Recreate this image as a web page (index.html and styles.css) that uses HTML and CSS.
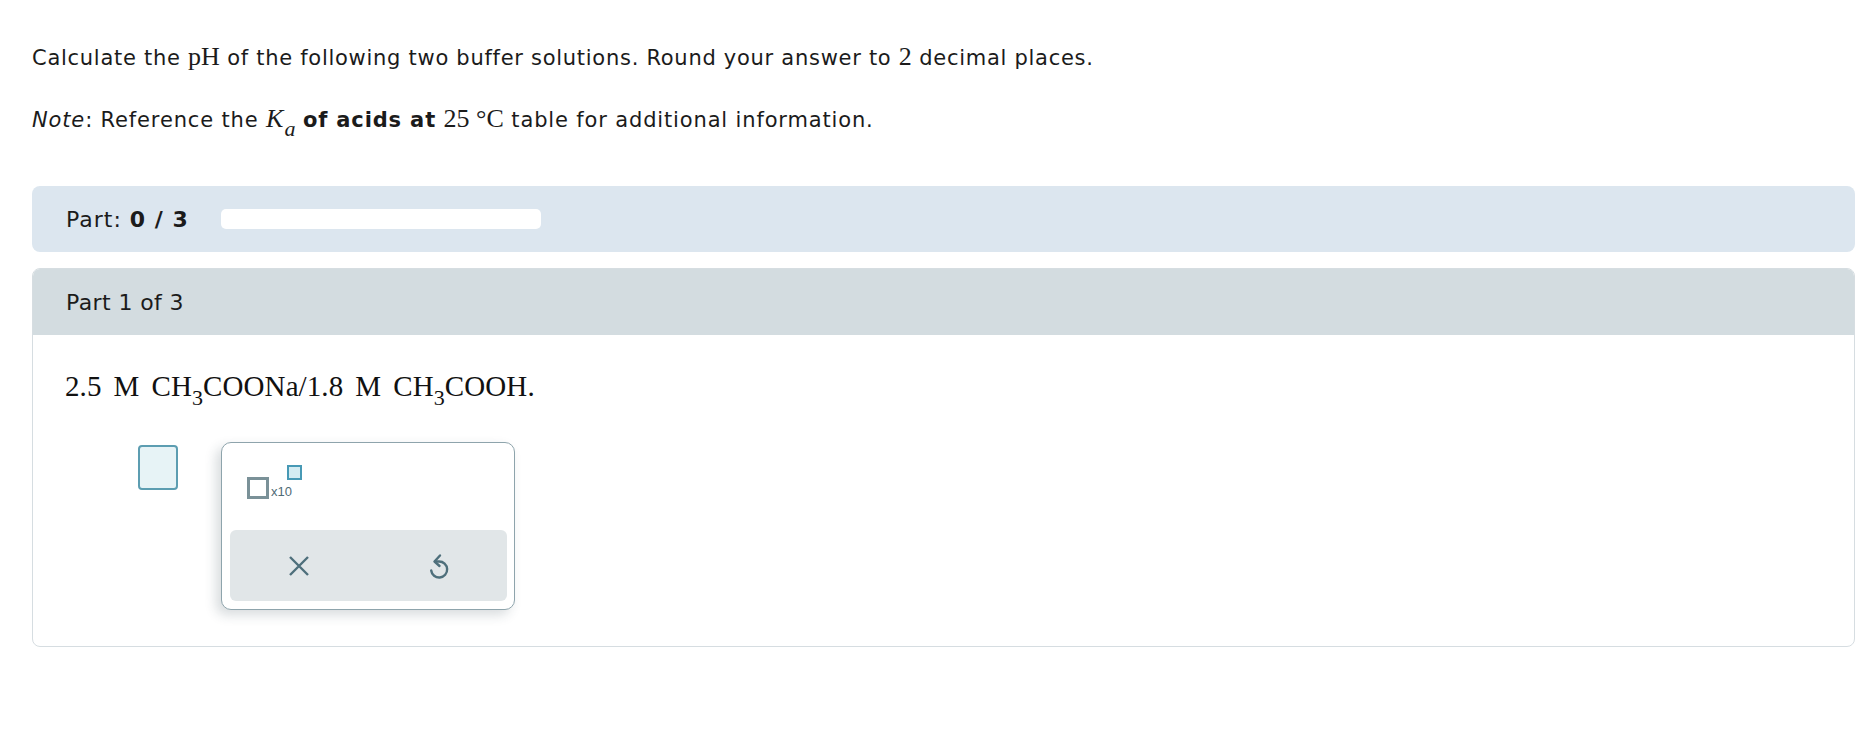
FILE: index.html
```html
<!DOCTYPE html>
<html>
<head>
<meta charset="utf-8">
<link rel="stylesheet" href="styles.css">
</head>
<body>
<div class="page">
  <p class="intro">Calculate the <span class="m">pH</span> of the following two buffer solutions. Round your answer to <span class="m">2</span> decimal places.</p>
  <p class="note"><i>Note</i>: Reference the <span class="m"><i>K</i><sub class="ka">a</sub></span> <b>of acids at</b> <span class="m">25 °C</span> table for additional information.</p>

  <div class="partbar">
    <span class="partlabel">Part: <b>0 / 3</b></span>
    <div class="progress"></div>
  </div>

  <div class="card">
    <div class="card-head">Part 1 of 3</div>
    <div class="card-body">
      <div class="formula">2.5<span class="sp"></span>M<span class="sp"></span>CH<sub>3</sub>COONa/1.8<span class="sp"></span>M<span class="sp"></span>CH<sub>3</sub>COOH.</div>
      <div class="answer-row">
        <div class="answer-box"></div>
        <div class="palette">
          <div class="palette-top">
            <div class="sci">
              <span class="sci-base"></span><span class="sci-x">x10</span><span class="sci-exp"></span>
            </div>
          </div>
          <div class="palette-actions">
            <button class="act" aria-label="clear">
              <svg width="22" height="22" viewBox="0 0 22 22"><path d="M2 2 L20 20 M20 2 L2 20" stroke="#4e6f7b" stroke-width="2.4" fill="none"/></svg>
            </button>
            <button class="act" aria-label="undo">
              <svg width="24" height="28" viewBox="0 0 24 28"><path d="M9 9.5 H13 A8 8 0 1 1 5.2 18.5" stroke="#4e6f7b" stroke-width="2.4" fill="none" stroke-linecap="round"/><path d="M14 3.5 L8.5 9.5 L13.5 14" stroke="#4e6f7b" stroke-width="2.4" fill="none" stroke-linecap="round" stroke-linejoin="round"/></svg>
            </button>
          </div>
        </div>
      </div>
    </div>
  </div>
</div>
</body>
</html>
```
FILE: styles.css
```css
html, body {
  margin: 0;
  padding: 0;
  background: #ffffff;
}
body {
  font-family: "DejaVu Sans", Verdana, sans-serif;
  font-size: 21px;
  letter-spacing: 0.72px;
  color: #1b1b1b;
}
.page {
  padding: 0 21px 0 32px;
}
.intro {
  margin: 0;
  padding-top: 45px;
  line-height: 24px;
}
.note {
  margin: 0;
  padding-top: 37px;
  line-height: 24px;
  height: 24px;
  letter-spacing: 0.85px;
}
.m {
  font-family: "Liberation Serif", "Times New Roman", serif;
  font-size: 26px;
  letter-spacing: 0;
}
.m i {
  font-style: italic;
}
.ka {
  font-size: 22px;
  font-style: italic;
  vertical-align: -9px;
  line-height: 0;
  margin-left: 1px;
}
.partbar {
  margin-top: 55px;
  height: 66px;
  background: #dce6ef;
  border-radius: 8px;
  display: flex;
  align-items: center;
  padding-left: 34px;
}
.partlabel {
  font-size: 22px;
  letter-spacing: 1px;
  width: 155px;
}
.partlabel b {
  font-weight: bold;
}
.progress {
  width: 320px;
  height: 20px;
  background: #ffffff;
  border-radius: 5px;
}
.card {
  margin-top: 16px;
  border: 1px solid #d6dde1;
  border-radius: 8px;
  overflow: hidden;
  height: 379px;
  box-sizing: border-box;
}
.card-head {
  background: #d3dce0;
  height: 66px;
  display: flex;
  align-items: center;
  padding-left: 33px;
  font-size: 22px;
  letter-spacing: 0.4px;
}
.card-body {
  padding-left: 32px;
}
.formula {
  font-family: "Liberation Serif", "Times New Roman", serif;
  font-size: 29px;
  letter-spacing: 0.1px;
  padding-top: 33px;
  line-height: 36px;
  color: #111;
}
.formula sub {
  font-size: 22px;
  vertical-align: -9px;
  line-height: 0;
}
.sp {
  display: inline-block;
  width: 12px;
}
.answer-row {
  display: flex;
  align-items: flex-start;
  margin-top: 38px;
  padding-left: 73px;
}
.answer-box {
  width: 36px;
  height: 41px;
  margin-top: 3px;
  border: 2px solid #5c9db1;
  border-radius: 4px;
  background: #e7f3f6;
}
.palette {
  margin-left: 43px;
  width: 294px;
  height: 168px;
  border: 1px solid #8ea4ac;
  border-radius: 10px;
  background: #fff;
  box-shadow: -5px 5px 12px rgba(40, 60, 70, 0.18);
  display: flex;
  flex-direction: column;
  padding: 0 7px 8px 8px;
  box-sizing: border-box;
}
.palette-top {
  flex: 1;
  padding-left: 17px;
  padding-top: 22px;
}
.sci {
  display: flex;
  align-items: flex-end;
  height: 34px;
}
.sci-base {
  width: 16px;
  height: 16px;
  border: 3px solid #7a9198;
  background: #fff;
  display: inline-block;
}
.sci-x {
  font-family: "Liberation Sans", Arial, sans-serif;
  font-size: 13px;
  letter-spacing: 0;
  color: #4f6b76;
  line-height: 13px;
  margin-left: 2px;
  margin-bottom: 1px;
}
.sci-exp {
  width: 11px;
  height: 11px;
  border: 2px solid #4799b5;
  background: #d4ecf2;
  display: inline-block;
  align-self: flex-start;
  margin-left: -5px;
}
.palette-actions {
  height: 71px;
  background: #e1e6e8;
  border-radius: 6px;
  display: flex;
  align-items: center;
}
.act {
  flex: 1;
  height: 100%;
  background: transparent;
  border: 0;
  padding: 0;
  display: flex;
  align-items: center;
  justify-content: center;
  cursor: pointer;
}
```
